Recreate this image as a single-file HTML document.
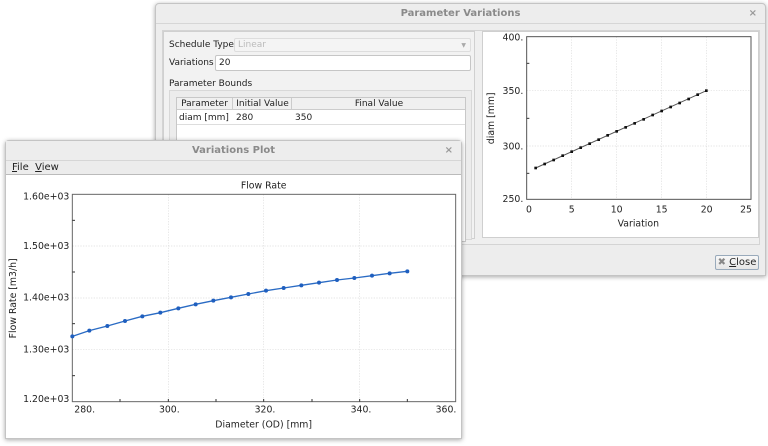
<!DOCTYPE html>
<html><head><meta charset="utf-8"><style>
*{margin:0;padding:0;box-sizing:border-box}
body{width:768px;height:446px;background:#fff;position:relative;overflow:hidden;font-family:"DejaVu Sans","Liberation Sans",sans-serif;font-size:9px;color:#222;white-space:nowrap}
.abs{position:absolute}
.win{position:absolute;background:#ededed;border:1px solid #c4c4c4;border-radius:4px 4px 0 0;box-shadow:0 1px 5px rgba(0,0,0,.35)}
.tb{position:absolute;left:0;right:0;top:0;height:20px;border-bottom:1px solid #d6d6d6;text-align:center;line-height:20px;font-weight:bold;color:#8a8a8a;font-size:10px}
.x{position:absolute;right:8px;top:0;color:#999;font-size:10px}
.inp{position:absolute;background:#fff;border:1px solid #c6c6c6;border-radius:2px;padding-left:3px;line-height:13px}
</style></head><body>

<!-- back window -->
<div class="win" style="left:155px;top:3px;width:611px;height:273px">
  <div class="tb">Parameter Variations<span class="x">×</span></div>
  <div class="abs" style="left:6px;top:26px;width:598px;height:215px;border:1px solid #d4d4d4;background:#efefef"></div>
  <div class="abs" style="left:7px;top:27px;width:312px;height:208px;border:1px solid #d0d0d0;background:#f2f2f2"></div>
  <div class="abs" style="left:13px;top:36px">Schedule Type</div>
  <div class="inp" style="left:78px;top:34px;width:237px;height:14px;color:#bbb;background:#f4f4f4;border-color:#ddd">Linear<span style="position:absolute;right:4px;font-size:6px;color:#aaa">▼</span></div>
  <div class="abs" style="left:13px;top:54px">Variations</div>
  <div class="inp" style="left:59px;top:51px;width:256px;height:16px;line-height:14px">20</div>
  <div class="abs" style="left:13px;top:75px">Parameter Bounds</div>
  <div class="abs" style="left:13px;top:86px;width:303px;height:150px;border:1px solid #d8d8d8;background:#ececec"></div>
  <div class="abs" style="left:20px;top:93px;width:290px;height:145px;border:1px solid #c8c8c8;background:#fff">
    <div class="abs" style="left:0;top:0;width:288px;height:12px;background:#f0f0f0;border-bottom:1px solid #ccc;line-height:12px">
      <span class="abs" style="left:0;width:56px;text-align:center;border-right:1px solid #ccc">Parameter</span>
      <span class="abs" style="left:57px;width:58px;text-align:center;border-right:1px solid #ccc">Initial Value</span>
      <span class="abs" style="left:116px;width:172px;text-align:center">Final Value</span>
    </div>
    <div class="abs" style="left:0;top:13px;width:288px;height:14px;border-bottom:1px solid #ddd;line-height:14px">
      <span class="abs" style="left:2px">diam [mm]</span><span class="abs" style="left:59px">280</span><span class="abs" style="left:118px">350</span>
    </div>
  </div>
  <div class="abs" style="left:326px;top:27px;width:277px;height:207px;border:1px solid #cfcfcf;background:#fff"></div>
  <div class="abs" style="left:559px;top:251px;width:44px;height:15px;border:1px solid #9ab;border-radius:2px;background:linear-gradient(#f8f8f8,#e6e6e6);text-align:center;line-height:13px;font-size:10px"><span style="color:#888">✖</span> <u>C</u>lose</div>
</div>
<svg class="abs" style="left:470px;top:0" width="298" height="280" viewBox="0 0 894 840" font-family="DejaVu Sans,sans-serif" fill="#222">
  <g stroke="#ddd" stroke-width="2" stroke-dasharray="4 4">
    <line x1="305" y1="110" x2="305" y2="598"/><line x1="440" y1="110" x2="440" y2="598"/><line x1="575" y1="110" x2="575" y2="598"/><line x1="710" y1="110" x2="710" y2="598"/>
    <line x1="170" y1="272" x2="843" y2="272"/><line x1="170" y1="438" x2="843" y2="438"/>
  </g>
  <rect x="170" y="110" width="673" height="488" fill="none" stroke="#555" stroke-width="3"/>
  <g stroke="#333" stroke-width="3"><line x1="170" y1="190" x2="178" y2="190"/><line x1="170" y1="355" x2="178" y2="355"/><line x1="170" y1="520" x2="178" y2="520"/></g>
  <g font-size="28" text-anchor="end"><text x="160" y="122">400.</text><text x="160" y="282">350.</text><text x="160" y="448">300.</text><text x="160" y="606">250.</text></g>
  <g font-size="28" text-anchor="middle"><text x="177" y="637">0</text><text x="305" y="637">5</text><text x="440" y="637">10</text><text x="575" y="637">15</text><text x="710" y="637">20</text><text x="828" y="637">25</text>
  <text x="505" y="680">Variation</text><text transform="translate(72,355) rotate(-90)">diam [mm]</text></g>
  <polyline fill="none" stroke="#555" stroke-width="3" points="197,504 709,272"/>
  <g fill="#111">
  <rect x="193" y="500" width="8" height="8"/><rect x="220" y="488" width="8" height="8"/><rect x="247" y="476" width="8" height="8"/><rect x="274" y="463" width="8" height="8"/><rect x="301" y="451" width="8" height="8"/><rect x="328" y="439" width="8" height="8"/><rect x="355" y="427" width="8" height="8"/><rect x="382" y="415" width="8" height="8"/><rect x="409" y="402" width="8" height="8"/><rect x="436" y="390" width="8" height="8"/><rect x="463" y="378" width="8" height="8"/><rect x="490" y="366" width="8" height="8"/><rect x="517" y="354" width="8" height="8"/><rect x="544" y="341" width="8" height="8"/><rect x="571" y="329" width="8" height="8"/><rect x="598" y="317" width="8" height="8"/><rect x="625" y="305" width="8" height="8"/><rect x="652" y="293" width="8" height="8"/><rect x="679" y="280" width="8" height="8"/><rect x="705" y="268" width="8" height="8"/>
  </g>
</svg>

<!-- front window -->
<div class="win" style="left:5px;top:140px;width:457px;height:299px;background:#fff">
  <div class="tb" style="background:#ededed">Variations Plot<span class="x">×</span></div>
  <div class="abs" style="left:0;right:0;top:20px;height:14px;background:#ececec;border-bottom:1px solid #bbb;line-height:13px;padding-left:6px;font-size:10px"><u>F</u>ile&nbsp;&nbsp;<u>V</u>iew</div>
</div>
<svg class="abs" style="left:0;top:135px" width="470" height="311" viewBox="0 0 1410 933" font-family="DejaVu Sans,sans-serif" fill="#222">
  <g stroke="#ddd" stroke-width="2" stroke-dasharray="4 4">
    <line x1="505" y1="178" x2="505" y2="800"/><line x1="791" y1="178" x2="791" y2="800"/><line x1="1079" y1="178" x2="1079" y2="800"/>
    <line x1="217" y1="333" x2="1367" y2="333"/><line x1="217" y1="489" x2="1367" y2="489"/><line x1="217" y1="644" x2="1367" y2="644"/>
  </g>
  <rect x="217" y="178" width="1150" height="622" fill="none" stroke="#666" stroke-width="3"/>
  <g stroke="#333" stroke-width="3">
    <line x1="217" y1="256" x2="225" y2="256"/><line x1="217" y1="411" x2="225" y2="411"/><line x1="217" y1="566" x2="225" y2="566"/><line x1="217" y1="722" x2="225" y2="722"/>
    <line x1="360" y1="800" x2="360" y2="792"/><line x1="648" y1="800" x2="648" y2="792"/><line x1="936" y1="800" x2="936" y2="792"/><line x1="1222" y1="800" x2="1222" y2="792"/>
    <line x1="505" y1="800" x2="505" y2="792"/><line x1="791" y1="800" x2="791" y2="792"/><line x1="1079" y1="800" x2="1079" y2="792"/>
  </g>
  <g font-size="28" text-anchor="end"><text x="208" y="194">1.60e+03</text><text x="208" y="342">1.50e+03</text><text x="208" y="497">1.40e+03</text><text x="208" y="652">1.30e+03</text><text x="208" y="801">1.20e+03</text></g>
  <g font-size="28" text-anchor="middle"><text x="254" y="832">280.</text><text x="508" y="832">300.</text><text x="795" y="832">320.</text><text x="1083" y="832">340.</text><text x="1338" y="832">360.</text>
  <text x="791" y="161">Flow Rate</text><text x="791" y="877">Diameter (OD) [mm]</text><text transform="translate(48,490) rotate(-90)">Flow Rate [m3/h]</text></g>
  <polyline fill="none" stroke="#2a6bc4" stroke-width="4" points="217,604 268,587 322,573 375,558 427,544 481,533 535,520 587,508 640,497 693,487 745,477 798,467 851,459 904,451 957,443 1011,435 1063,429 1116,422 1169,415 1222,409"/>
  <g fill="#1f5fbf">
  <circle cx="217" cy="604" r="6"/><circle cx="268" cy="587" r="6"/><circle cx="322" cy="573" r="6"/><circle cx="375" cy="558" r="6"/><circle cx="427" cy="544" r="6"/><circle cx="481" cy="533" r="6"/><circle cx="535" cy="520" r="6"/><circle cx="587" cy="508" r="6"/><circle cx="640" cy="497" r="6"/><circle cx="693" cy="487" r="6"/><circle cx="745" cy="477" r="6"/><circle cx="798" cy="467" r="6"/><circle cx="851" cy="459" r="6"/><circle cx="904" cy="451" r="6"/><circle cx="957" cy="443" r="6"/><circle cx="1011" cy="435" r="6"/><circle cx="1063" cy="429" r="6"/><circle cx="1116" cy="422" r="6"/><circle cx="1169" cy="415" r="6"/><circle cx="1222" cy="409" r="6"/>
  </g>
</svg>
</body></html>
